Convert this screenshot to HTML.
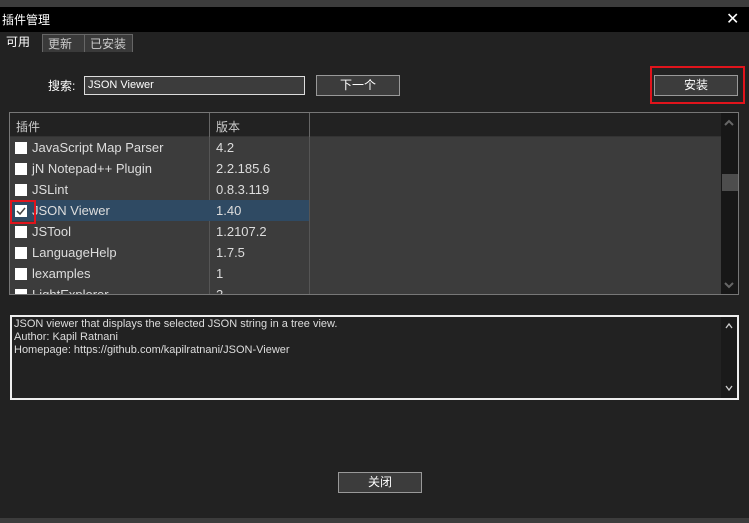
<!DOCTYPE html>
<html><head><meta charset="utf-8"><style>
*{margin:0;padding:0;box-sizing:border-box}
body{width:749px;height:523px;background:#222;position:relative;overflow:hidden;font-family:"Liberation Sans","Noto Sans CJK SC",sans-serif;color:#ddd;font-size:12px}
.a{position:absolute}
.btn{position:absolute;background:#3c3c3c;border:1px solid #999;color:#fff;text-align:center;font-size:12px}
.row{position:absolute;left:0;width:710px;height:21px;line-height:21px;font-size:13px;color:#ddd}
.cb{position:absolute;left:5px;top:5px;width:12px;height:12px;background:#fff}
.n{position:absolute;left:22px}
.v{position:absolute;left:206px}
</style></head><body>
<div class="a" style="left:0;top:0;width:749px;height:7px;background:#3c3c3c"></div>
<div class="a" style="left:0;top:7px;width:749px;height:25px;background:#000"></div>
<div class="a" style="left:2px;top:11px;color:#fff;font-size:12px">插件管理</div>
<div class="a" style="left:726px;top:9px;color:#fff;font-size:16px">✕</div>
<div class="a" style="left:6px;top:33px;color:#fff;font-size:12px">可用</div>
<div class="a" style="left:42px;top:34px;width:91px;height:18px;background:#3a3a3a;border:1px solid #666;border-bottom:none"></div>
<div class="a" style="left:84px;top:34px;width:1px;height:18px;background:#666"></div>
<div class="a" style="left:48px;top:35px;color:#ccc">更新</div>
<div class="a" style="left:90px;top:35px;color:#ccc">已安装</div>
<div class="a" style="left:48px;top:77px;color:#fff">搜索:</div>
<div class="a" style="left:84px;top:76px;width:221px;height:19px;background:#3c3c3c;border:1px solid #ddd;color:#fff;font-size:11px;padding:2px 3px">JSON Viewer</div>
<div class="btn" style="left:316px;top:75px;width:84px;height:21px;line-height:19px">下一个</div>
<div class="a" style="left:650px;top:66px;width:95px;height:38px;border:2px solid #e0141c"></div>
<div class="btn" style="left:654px;top:75px;width:84px;height:21px;line-height:19px">安装</div>
<div class="a" style="left:9px;top:112px;width:730px;height:183px;border:1px solid #777;background:#1a1a1a;overflow:hidden">
 <div class="a" style="left:0;top:0;width:711px;height:24px;background:#222;border-bottom:1px solid #333"></div>
 <div class="a" style="left:199px;top:0;width:1px;height:24px;background:#666"></div>
 <div class="a" style="left:299px;top:0;width:1px;height:24px;background:#666"></div>
 <div class="a" style="left:6px;top:5px;color:#ccc">插件</div>
 <div class="a" style="left:206px;top:5px;color:#ccc">版本</div>
 <div class="a" style="left:0;top:24px;width:711px;height:160px;background:#3c3c3c"></div>
 <div class="a" style="left:199px;top:24px;width:1px;height:160px;background:#555"></div>
 <div class="a" style="left:299px;top:24px;width:1px;height:160px;background:#555"></div>
 <div class="row" style="top:24px"><div class="cb"></div><span class="n">JavaScript Map Parser</span><span class="v">4.2</span></div>
 <div class="row" style="top:45px"><div class="cb"></div><span class="n">jN Notepad++ Plugin</span><span class="v">2.2.185.6</span></div>
 <div class="row" style="top:66px"><div class="cb"></div><span class="n">JSLint</span><span class="v">0.8.3.119</span></div>
 <div class="row" style="top:87px;width:299px;background:#2f4a63"><div class="cb"></div>
  <svg class="a" style="left:5px;top:5px" width="12" height="12"><path d="M2 6 L5 9 L10 3" stroke="#444" stroke-width="1.5" fill="none"/></svg>
  <span class="n">JSON Viewer</span><span class="v">1.40</span></div>
 <div class="row" style="top:108px"><div class="cb"></div><span class="n">JSTool</span><span class="v">1.2107.2</span></div>
 <div class="row" style="top:129px"><div class="cb"></div><span class="n">LanguageHelp</span><span class="v">1.7.5</span></div>
 <div class="row" style="top:150px"><div class="cb"></div><span class="n">lexamples</span><span class="v">1</span></div>
 <div class="row" style="top:171px"><div class="cb"></div><span class="n">LightExplorer</span><span class="v">2</span></div>
 <div class="a" style="left:711px;top:0;width:18px;height:183px;background:#171717"></div>
 <svg class="a" style="left:713px;top:6px" width="12" height="8"><path d="M2 6 L6 2 L10 6" stroke="#666" stroke-width="2" fill="none"/></svg>
 <div class="a" style="left:712px;top:61px;width:16px;height:17px;background:#4d4d4d"></div>
 <svg class="a" style="left:713px;top:168px" width="12" height="8"><path d="M2 2 L6 6 L10 2" stroke="#666" stroke-width="2" fill="none"/></svg>
</div>
<div class="a" style="left:10px;top:200px;width:26px;height:24px;border:2px solid #e0141c"></div>
<div class="a" style="left:10px;top:315px;width:729px;height:85px;border:2px solid #eee;background:#222"></div>
<div class="a" style="left:721px;top:317px;width:16px;height:81px;background:#1a1a1a"></div>
<svg class="a" style="left:724px;top:322px" width="10" height="8"><path d="M2 6 L5 2 L8 6" stroke="#ccc" stroke-width="1.3" fill="none"/></svg>
<svg class="a" style="left:724px;top:384px" width="10" height="8"><path d="M2 2 L5 6 L8 2" stroke="#ccc" stroke-width="1.3" fill="none"/></svg>
<div class="a" style="left:14px;top:318px;color:#ddd;font-size:11px;line-height:13px">JSON viewer that displays the selected JSON string in a tree view.<br>Author: Kapil Ratnani<br>Homepage: https://github.com/kapilratnani/JSON-Viewer</div>
<div class="btn" style="left:338px;top:472px;width:84px;height:21px;line-height:19px">关闭</div>
<div class="a" style="left:0;top:518px;width:749px;height:5px;background:#3c3c3c"></div>
</body></html>
